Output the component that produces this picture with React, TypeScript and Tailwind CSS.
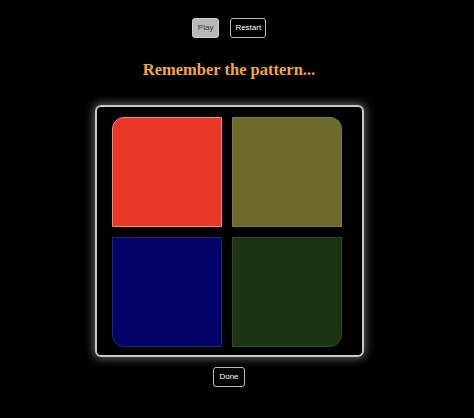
import React from "react";

const pads = [
  { id: "red", cls: "bg-[#ea3828] border-[#f08a80] rounded-tl-[12px]" },
  { id: "olive", cls: "bg-[#6b6a2a] border-[#7d7c3c] rounded-tr-[12px]" },
  { id: "navy", cls: "bg-[#020268] border-[#24247a] rounded-bl-[12px]" },
  { id: "green", cls: "bg-[#1b3513] border-[#33482b] rounded-br-[12px]" },
];

export default function App() {
  return (
    <div className="min-h-[418px] w-full bg-black">
      <div className="flex w-[458px] flex-col items-center pt-[18px] font-['Liberation_Sans',Arial,sans-serif]">
        {/* Controls */}
        <div className="flex gap-[11px]">
          <button className="h-[20px] rounded-[3px] border border-[#d0d0d0] bg-[#b8b8b8] px-[5px] text-[8px] text-[#3a3a3a]">
            Play
          </button>
          <button className="h-[20px] rounded-[3px] border border-[#bdbdbd] bg-black px-[4px] text-[8px] text-white">
            Restart
          </button>
        </div>

        <h1 className="mt-[22px] font-['Liberation_Serif','Times_New_Roman',serif] text-[16.5px] font-bold leading-[20px] text-[#f2a545]">
          Remember the pattern...
        </h1>

        {/* Board */}
        <div className="mt-[25px] rounded-[6px] border-2 border-[#c8c8c8] pb-[8px] pl-[15px] pr-[20px] pt-[10px] shadow-[0_0_8px_2px_rgba(255,255,255,0.35)]">
          <div className="grid grid-cols-[110px_110px] gap-[10px]">
            {pads.map((p) => (
              <div key={p.id} className={`h-[110px] w-[110px] border ${p.cls}`} />
            ))}
          </div>
        </div>

        <button className="mt-[10px] h-[20px] rounded-[3px] border border-[#bdbdbd] bg-black px-[5px] text-[8px] text-white">
          Done
        </button>
      </div>
    </div>
  );
}
